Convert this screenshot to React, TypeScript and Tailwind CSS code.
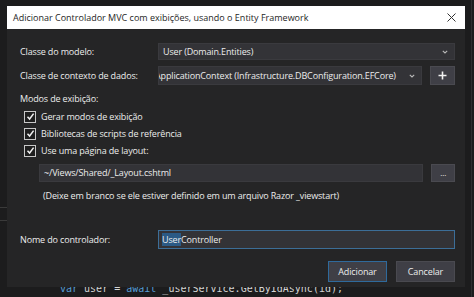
import React from "react";

const Check = () => (
  <div className="w-[12px] h-[12px] border border-[#c8c8c8] bg-[#1e1e1e] flex items-center justify-center">
    <svg width="9" height="9" viewBox="0 0 9 9">
      <path d="M1.5 4.8 L3.6 7 L7.6 1.6" stroke="#f1f1f1" strokeWidth="1.5" fill="none" />
    </svg>
  </div>
);

const Chevron = () => (
  <svg width="6" height="4" viewBox="0 0 6 4">
    <path d="M0.8 0.8 L3 3 L5.2 0.8" stroke="#b8b8b8" strokeWidth="1.1" fill="none" />
  </svg>
);

export default function App() {
  return (
    <div
      className="relative w-[474px] h-[297px] bg-[#1c1c1d] overflow-hidden text-[#ececec]"
      style={{ fontFamily: '"Open Sans", "Noto Sans", sans-serif' }}
    >
      {/* background editor fragments */}
      <div className="absolute left-0 top-[207px] w-[7px] h-[14px] border-y border-[#3a3a3a]" />
      <div className="absolute right-0 top-0 w-[3px] h-[297px] border-l border-[#2e2e30]" />
      <div
        className="absolute left-[60px] top-[282px] text-[10px] leading-[13px] whitespace-pre text-[#d4d4d4]"
        style={{ fontFamily: '"DejaVu Sans Mono", monospace' }}
      >
        <span className="text-[#569cd6]">var</span> user = <span className="text-[#569cd6]">await</span> _userService.GetByIdAsync(id);
      </div>

      <div className="relative ml-[7px] mt-[6px] w-[458px] h-[281px] bg-[#252526] flex flex-col">
        {/* title bar */}
        <div className="h-[23px] bg-white flex items-center justify-between pl-[6px] pr-[9px]">
          <span className="text-[9px] text-[#1e1e1e]">
            Adicionar Controlador MVC com exibições, usando o Entity Framework
          </span>
          <svg width="9" height="9" viewBox="0 0 9 9">
            <path d="M0.5 0.5 L8.5 8.5 M8.5 0.5 L0.5 8.5" stroke="#333" strokeWidth="1" />
          </svg>
        </div>

        <div className="flex flex-col pl-[13px] pr-[10px] pt-[14px] text-[9px] tracking-[-0.15px]">
          {/* row 1 */}
          <div className="flex items-center h-[17px]">
            <div className="w-[138px]">Classe do modelo:</div>
            <div className="flex-1 h-[17px] bg-[#333337] border border-[#3a3a3e] flex items-center justify-between pl-[4px] pr-[6px]">
              <span>User (Domain.Entities)</span>
              <Chevron />
            </div>
          </div>
          {/* row 2 */}
          <div className="flex items-center h-[19px] mt-[6px]">
            <div className="w-[138px]">Classe de contexto de dados:</div>
            <div className="w-[264px] h-[19px] bg-[#333337] border border-[#3a3a3e] flex items-center justify-between pr-[6px] overflow-hidden">
              <span className="whitespace-nowrap -ml-[4px]">ApplicationContext (Infrastructure.DBConfiguration.EFCore)</span>
              <Chevron />
            </div>
            <div className="ml-[8px] w-[25px] h-[19px] bg-[#3f3f46] border border-[#4a4a50] flex items-center justify-center">
              <svg width="9" height="9" viewBox="0 0 9 9">
                <path d="M4.5 0.5 V8.5 M0.5 4.5 H8.5" stroke="#f1f1f1" strokeWidth="1.6" />
              </svg>
            </div>
          </div>
          {/* modos */}
          <div className="mt-[6px] h-[15px] leading-[15px]">Modos de exibição:</div>
          <div className="flex flex-col gap-[4px] mt-[4px] pl-[4px]">
            <div className="flex items-center gap-[5px] h-[13px]">
              <Check />
              <span>Gerar modos de exibição</span>
            </div>
            <div className="flex items-center gap-[5px] h-[13px]">
              <Check />
              <span>Bibliotecas de scripts de referência</span>
            </div>
            <div className="flex items-center gap-[5px] h-[13px]">
              <Check />
              <span>Use uma página de layout:</span>
            </div>
          </div>
          <div className="flex items-center mt-[7px] pl-[19px] h-[18px]">
            <div className="w-[391px] h-[18px] bg-[#333337] border border-[#3a3a3e] flex items-center pl-[4px]">
              ~/Views/Shared/_Layout.cshtml
            </div>
            <div className="ml-[8px] w-[24px] h-[18px] bg-[#3f3f46] border border-[#4a4a50] flex items-center justify-center text-[8px] leading-none">
              ...
            </div>
          </div>
          <div className="mt-[6px] pl-[23px] h-[15px] leading-[15px]">
            (Deixe em branco se ele estiver definido em um arquivo Razor _viewstart)
          </div>

          {/* nome do controlador */}
          <div className="flex items-center h-[19px] mt-[27px]">
            <div className="w-[138px]">Nome do controlador:</div>
            <div className="flex-1 h-[19px] bg-[#333337] border border-[#3c6e98] flex items-center pl-[3px]">
              <span className="bg-[#2b5a85]">User</span>
              <span>Controller</span>
            </div>
          </div>

          {/* buttons */}
          <div className="flex justify-end gap-[9px] mt-[12px]">
            <div className="w-[59px] h-[21px] bg-[#3f3f46] border border-[#2f6a9c] flex items-center justify-center">
              Adicionar
            </div>
            <div className="w-[59px] h-[21px] bg-[#3f3f46] border border-[#4a4a50] flex items-center justify-center">
              Cancelar
            </div>
          </div>
        </div>
      </div>
    </div>
  );
}
